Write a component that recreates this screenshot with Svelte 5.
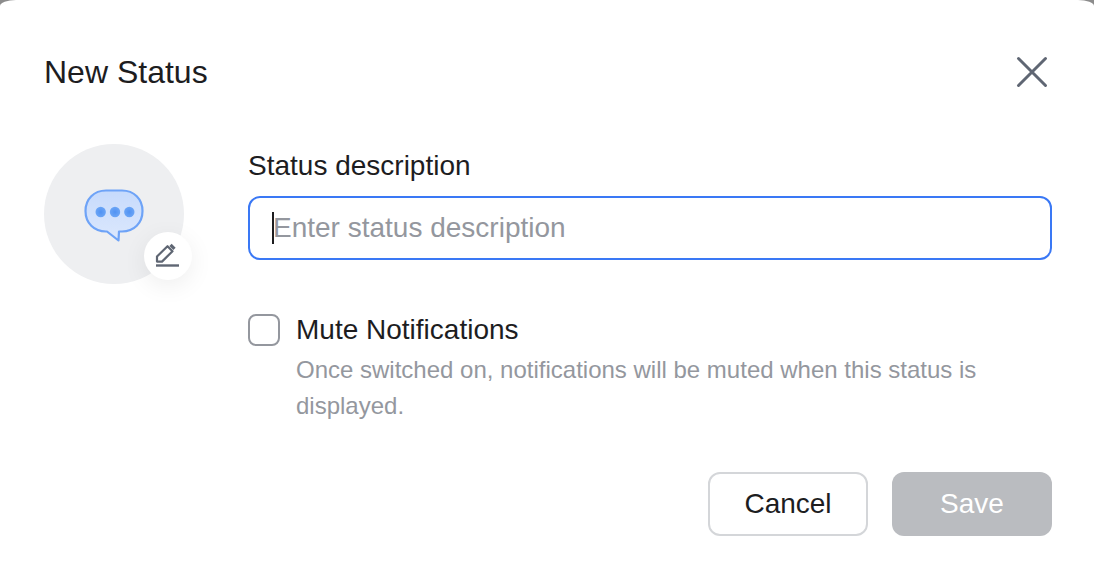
<script>
  let name = '';
</script>

<div class="backdrop">
  <div class="dialog">
    <header class="head">
      <h2 class="title">New Status</h2>
      <button class="close" aria-label="Close">
        <svg width="32" height="32" viewBox="0 0 32 32" fill="none" stroke="#5f6673" stroke-width="3" stroke-linecap="round"><path d="M2.500 2.500 29.500 29.500M29.500 2.500 2.500 29.500"/></svg>
      </button>
    </header>
    <div class="main">
      <div class="avatar">
        <svg class="bubble" width="60" height="56" viewBox="0 0 60 56">
          <defs>
            <linearGradient id="bg" x1="0" y1="0" x2="0" y2="1"><stop offset="0" stop-color="#c6dafc"/><stop offset="1" stop-color="#dce8fd"/></linearGradient>
            <radialGradient id="dot"><stop offset="0" stop-color="#5092f3"/><stop offset="1" stop-color="#6ba5f6"/></radialGradient>
          </defs>
          <path d="M22 4.500H38C50 4.500 58.500 13 58.500 25S50 45.500 38 45.500H35L34.500 54.500 23 45.500H22C10 45.500 1.500 37 1.500 25S10 4.500 22 4.500Z" fill="url(#bg)" stroke="#6ea3f7" stroke-width="2.200" stroke-linejoin="round"/>
          <circle cx="16.700" cy="26" r="5.200" fill="url(#dot)"/>
          <circle cx="31" cy="26" r="5.200" fill="url(#dot)"/>
          <circle cx="45.300" cy="26" r="5.200" fill="url(#dot)"/>
        </svg>
        <div class="edit">
          <svg width="26" height="26" viewBox="0 0 26 26" fill="none" stroke="#5f6673" stroke-width="2.200" stroke-linejoin="round"><path d="M2 18.600V13.500L12.500 3.200 17.500 8.200 7 18.600Z"/><path d="M15.500 1.800 19.500 5.800" stroke-width="3.200"/><path d="M1 22.500H24" stroke-width="2.400"/></svg>
        </div>
      </div>
      <div class="form">
        <label class="label" for="desc">Status description</label>
        <div class="field">
          <span class="caret"></span>
          <input id="desc" class="input" placeholder="Enter status description" bind:value={name} />
        </div>
        <div class="mute">
          <span class="check"></span>
          <div class="mute-text">
            <div class="mute-title">Mute Notifications</div>
            <div class="mute-hint">Once switched on, notifications will be muted when this status is displayed.</div>
          </div>
        </div>
      </div>
    </div>
    <footer class="foot">
      <button class="btn cancel">Cancel</button>
      <button class="btn save">Save</button>
    </footer>
  </div>
</div>

<style>
  :global(body) {
    margin: 0;
    background: #fff;
  }
  .backdrop {
    width: 1094px;
    height: 568px;
    background: #8c8c8c;
    overflow: hidden;
    font-family: "Liberation Sans", Arial, sans-serif;
  }
  .dialog {
    width: 1094px;
    height: 568px;
    box-sizing: border-box;
    background: #fff;
    border-radius: 16px 16px 0 0 / 6px 6px 0 0;
    padding: 52px 42px 32px 44px;
    display: flex;
    flex-direction: column;
  }
  .head {
    display: flex;
    align-items: center;
    justify-content: space-between;
    height: 40px;
    padding-right: 4px;
  }
  .title {
    margin: 0;
    font-size: 32px;
    font-weight: 400;
    color: #1d1d1f;
    line-height: 40px;
  }
  .close {
    border: 0;
    background: none;
    padding: 0;
    width: 32px;
    height: 32px;
    display: block;
  }
  .close svg { display: block; }
  .main {
    display: flex;
    gap: 64px;
    margin-top: 52px;
  }
  .avatar {
    position: relative;
    width: 140px;
    height: 140px;
    flex: none;
    border-radius: 50%;
    background: #eeeff1;
    display: flex;
    align-items: center;
    justify-content: center;
  }
  .bubble {
    display: block;
    filter: blur(0.3px);
  }
  .edit {
    position: absolute;
    right: -8px;
    bottom: 4px;
    width: 48px;
    height: 48px;
    border-radius: 50%;
    background: #fff;
    box-shadow: 0 6px 24px rgba(0, 0, 0, 0.07);
    display: flex;
    align-items: center;
    justify-content: center;
  }
  .form {
    flex: 1;
    min-width: 0;
  }
  .label {
    display: block;
    font-size: 28px;
    line-height: 36px;
    margin-top: 4px;
    color: #1d1d1f;
  }
  .field {
    position: relative;
    margin-top: 12px;
  }
  .caret {
    position: absolute;
    left: 24px;
    top: 16px;
    width: 2px;
    height: 32px;
    background: #1d1d1f;
  }
  .input {
    width: 100%;
    height: 64px;
    box-sizing: border-box;
    border: 2px solid #3a78f5;
    border-radius: 12px;
    padding: 0 23px;
    font: 28px "Liberation Sans", Arial, sans-serif;
    color: #1d1d1f;
    outline: none;
    caret-color: transparent;
  }
  .input::placeholder {
    color: #94979e;
    opacity: 1;
  }
  .mute {
    display: flex;
    gap: 16px;
    margin-top: 52px;
  }
  .check {
    width: 32px;
    height: 32px;
    box-sizing: border-box;
    border: 2px solid #94979e;
    border-radius: 8px;
    flex: none;
    margin-top: 2px;
  }
  .mute-title {
    font-size: 28px;
    line-height: 36px;
    color: #1d1d1f;
  }
  .mute-hint {
    font-size: 24px;
    line-height: 36px;
    color: #94979e;
    margin-top: 4px;
  }
  .foot {
    display: flex;
    justify-content: flex-end;
    gap: 24px;
    margin-top: auto;
  }
  .btn {
    width: 160px;
    height: 64px;
    box-sizing: border-box;
    border-radius: 12px;
    font: 28px "Liberation Sans", Arial, sans-serif;
    padding: 0;
  }
  .cancel {
    background: #fff;
    border: 2px solid #d4d6d9;
    color: #1d1d1f;
  }
  .save {
    background: #babcc0;
    border: 0;
    color: #fff;
  }
</style>
